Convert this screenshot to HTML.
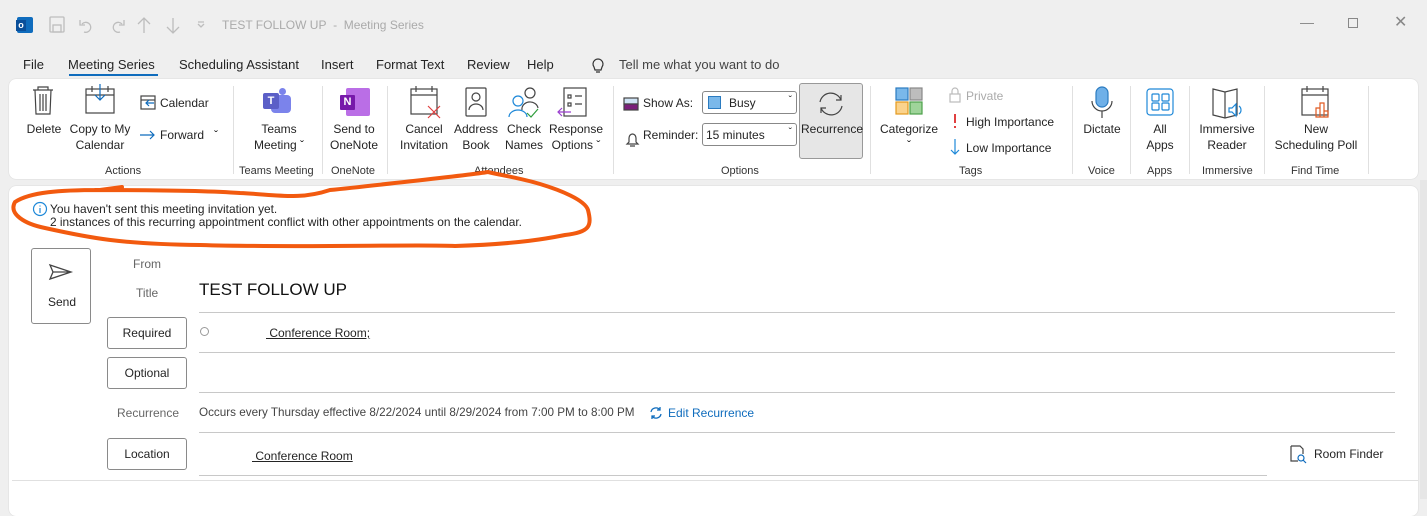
<!DOCTYPE html>
<html><head><meta charset="utf-8"><style>
*{box-sizing:border-box;margin:0;padding:0}
body{width:1427px;height:499px;background:#efefef;font-family:"Liberation Sans",sans-serif;color:#242424;position:relative;overflow:hidden;font-size:12px}
.a{position:absolute;white-space:nowrap}
.panel{position:absolute;background:#fff;border-radius:7px;box-shadow:0 0 1px #bbb}
.lbl{position:absolute;font-size:11px;color:#333;top:165px}
.btxt{position:absolute;font-size:12px;text-align:center;line-height:16px}
.sep{position:absolute;top:86px;width:1px;height:88px;background:#e0e0e0}
.box{position:absolute;border:1px solid #8a8a8a;border-radius:3px;background:#fff;font-size:12px;text-align:center}
.line{position:absolute;height:1px;background:#c8c8c8}
.gray{color:#666}
u{text-decoration:underline}
</style></head><body>
<div class="a" style="left:17px;top:17px;width:16px;height:16px;background:#0f6cbd;border-radius:2px"></div>
<div class="a" style="left:16px;top:20px;width:10px;height:11px;background:#0a4f9a;color:#fff;font-size:9px;font-weight:bold;text-align:center;line-height:11px">o</div>
<svg class="a" style="left:40px;top:14px" width="170" height="22" fill="none" stroke="#bdbdbd" stroke-width="1.3">
<rect x="10" y="3" width="14" height="15" rx="1"/><rect x="13" y="11" width="8" height="7"/>
<path d="M42 10 a5 5 0 1 1 2 8 M40 6 v5 h5"/><path d="M82 10 a5 5 0 1 0 -2 8 M84 6 v5 h-5"/>
<path d="M104 4 v15 M98 10 l6 -6 6 6"/><path d="M133 4 v15 M127 13 l6 6 6 -6"/><path d="M158 10 l3 3 3 -3 M158 8 h6"/></svg>
<div class="a" style="left:222px;top:18px;font-size:12px;color:#aaa">TEST FOLLOW UP&nbsp; - &nbsp;Meeting Series</div>
<div class="a" style="left:1300px;top:14px;color:#888;font-size:14px">&#8212;</div>
<div class="a" style="left:1348px;top:18px;width:10px;height:10px;border:1px solid #888"></div>
<div class="a" style="left:1394px;top:12px;color:#888;font-size:16px">&#x2715;</div>
<div class="a" style="left:23px;top:57px;font-size:13px">File</div>
<div class="a" style="left:68px;top:57px;font-size:13px">Meeting Series</div>
<div class="a" style="left:69px;top:74px;width:89px;height:2px;background:#0f6cbd"></div>
<div class="a" style="left:179px;top:57px;font-size:13px">Scheduling Assistant</div>
<div class="a" style="left:321px;top:57px;font-size:13px">Insert</div>
<div class="a" style="left:376px;top:57px;font-size:13px">Format Text</div>
<div class="a" style="left:467px;top:57px;font-size:13px">Review</div>
<div class="a" style="left:527px;top:57px;font-size:13px">Help</div>
<svg class="a" style="left:590px;top:55px" width="16" height="20" fill="none" stroke="#333" stroke-width="1.2"><path d="M4 12 a5 5 0 1 1 8 0 l-1 3 h-6 z M6 17 h4"/></svg>
<div class="a" style="left:619px;top:57px;font-size:13px;color:#444">Tell me what you want to do</div>
<div class="panel" style="left:9px;top:79px;width:1409px;height:100px"></div>
<svg class="a" style="left:0;top:80px" width="1427" height="80" fill="none" stroke="#444" stroke-width="1.2">
<path d="M33 10 h20 M38 10 v-3 h10 v3 M35 10 l1 24 h14 l1 -24 M40 14 v17 M43 14 v17 M46 14 v17"/>
<rect x="86" y="9" width="28" height="24"/><path d="M86 15 h28 M92 6 v6 M108 6 v6"/><path d="M100 4 v16 M95 15 l5 5 5 -5" stroke="#0f6cbd"/>
<rect x="141" y="16" width="14" height="13"/><path d="M141 20 h14" /><path d="M154 23 h-8 M149 20 l-3 3 3 3" stroke="#0f6cbd"/>
<path d="M140 55 h14 M150 51 l4 4 -4 4" stroke="#0f6cbd"/>
<rect x="411" y="9" width="26" height="25"/><path d="M411 15 h26 M416 6 v6 M432 6 v6"/><path d="M428 26 l12 12 M440 26 l-12 12" stroke="#e04040"/>
<rect x="466" y="8" width="20" height="28" rx="1"/><circle cx="476" cy="17" r="4"/><path d="M469 30 a7 6 0 0 1 14 0"/>
<circle cx="530" cy="13" r="5"/><path d="M522 30 a8 7 0 0 1 16 -2"/><circle cx="518" cy="21" r="5" stroke="#1e88d8"/><path d="M509 37 a9 7 0 0 1 18 0" stroke="#1e88d8"/><path d="M527 33 l4 4 7 -8" stroke="#2e9d3c"/>
<rect x="564" y="8" width="22" height="28"/><path d="M568 15 h3 v3 h-3z M575 16 h7 M568 23 h3 v3 h-3z M575 24 h7"/><path d="M571 32 h-13 M562 28 l-4 4 4 4" stroke="#9b3fcf"/>
<rect x="624" y="18" width="14" height="6" fill="#cfe3f5" stroke="#444"/><rect x="624" y="24" width="14" height="6" fill="#7a1f7a" stroke="#444"/>
<path d="M629 58 a3.5 4 0 0 1 7 0 v4 l2 2 h-11 l2 -2z M630 66 h5"/>
<rect x="896" y="8" width="12" height="12" fill="#7ab8ea" stroke="#2b7bc0"/><rect x="910" y="8" width="12" height="12" fill="#bdbdbd" stroke="#888"/>
<rect x="896" y="22" width="12" height="12" fill="#fbd38d" stroke="#e39a1e"/><rect x="910" y="22" width="12" height="12" fill="#9fd49a" stroke="#4ca14a"/>
<rect x="950" y="14" width="10" height="8" stroke="#bbb"/><path d="M952 14 v-3 a3 3 0 0 1 6 0 v3" stroke="#bbb"/>
<path d="M955 34 v9 M955 46 v2" stroke="#e04040" stroke-width="2"/>
<path d="M955 59 v15 M951 70 l4 4 4 -4" stroke="#1e88d8"/>
<rect x="1096" y="7" width="12" height="20" rx="6" fill="#6fb0e8" stroke="#2b7bc0"/><path d="M1092 21 a10 10 0 0 0 20 0 M1102 31 v7"/>
<rect x="1147" y="9" width="26" height="26" rx="3" stroke="#1e88d8"/><rect x="1152" y="14" width="7" height="7" rx="1" stroke="#1e88d8"/><rect x="1162" y="14" width="7" height="7" rx="1" stroke="#1e88d8"/><rect x="1152" y="23" width="7" height="7" rx="1" stroke="#1e88d8"/><rect x="1162" y="23" width="7" height="7" rx="1" stroke="#1e88d8"/>
<path d="M1213 9 l12 3 12 -3 v26 l-12 3 -12 -3z M1225 12 v26"/><path d="M1229 28 h3 l4 -4 v12 l-4 -4 h-3z M1239 26 a5 5 0 0 1 0 8" stroke="#1e88d8"/>
<rect x="1302" y="9" width="26" height="26"/><path d="M1302 15 h26 M1307 6 v6 M1323 6 v6"/><path d="M1316 28 h4 v9 h-4z M1320 23 h4 v14 h-4z M1324 31 h4 v6 h-4z" stroke="#e05a22"/>
<path d="M1398 82 l5 4 5 -4"/>
</svg>
<div class="a" style="left:263px;top:93px;width:16px;height:16px;background:#5b5fc7;border-radius:2px;color:#fff;font-weight:bold;font-size:11px;text-align:center;line-height:16px;z-index:2">T</div>
<div class="a" style="left:271px;top:95px;width:20px;height:18px;background:#7b83eb;border-radius:4px"></div>
<div class="a" style="left:279px;top:88px;width:7px;height:7px;background:#7b83eb;border-radius:50%"></div>
<div class="a" style="left:346px;top:88px;width:24px;height:28px;background:#ba6ee6;border-radius:2px"></div>
<div class="a" style="left:340px;top:95px;width:15px;height:15px;background:#7719aa;color:#fff;font-weight:bold;font-size:11px;text-align:center;line-height:15px;border-radius:1px">N</div>
<div class="btxt" style="left:22px;top:121px;width:44px">Delete</div>
<div class="btxt" style="left:66px;top:121px;width:68px">Copy to My<br>Calendar</div>
<div class="a" style="left:160px;top:96px">Calendar</div>
<div class="a" style="left:160px;top:128px">Forward &nbsp;&nbsp;&#711;</div>
<div class="btxt" style="left:244px;top:121px;width:70px">Teams<br>Meeting &#711;</div>
<div class="btxt" style="left:326px;top:121px;width:56px">Send to<br>OneNote</div>
<div class="btxt" style="left:396px;top:121px;width:56px">Cancel<br>Invitation</div>
<div class="btxt" style="left:452px;top:121px;width:48px">Address<br>Book</div>
<div class="btxt" style="left:502px;top:121px;width:44px">Check<br>Names</div>
<div class="btxt" style="left:546px;top:121px;width:60px">Response<br>Options &#711;</div>
<div class="a" style="left:643px;top:96px">Show As:</div>
<div class="a" style="left:643px;top:128px">Reminder:</div>
<div class="a" style="left:702px;top:91px;width:95px;height:23px;border:1px solid #888;border-radius:3px;background:#fff"><div class="a" style="left:5px;top:4px;width:13px;height:13px;background:#7ab8ea;border:1px solid #2b7bc0"></div><span class="a" style="left:26px;top:4px">Busy</span><span class="a" style="right:4px;top:3px;font-size:10px">&#711;</span></div>
<div class="a" style="left:702px;top:123px;width:95px;height:23px;border:1px solid #888;border-radius:3px;background:#fff"><span class="a" style="left:3px;top:4px">15 minutes</span><span class="a" style="right:4px;top:3px;font-size:10px">&#711;</span></div>
<div class="a" style="left:799px;top:83px;width:64px;height:76px;background:#e6e6e6;border:1px solid #999;border-radius:3px"></div>
<svg class="a" style="left:0;top:80px;z-index:2" width="900" height="50" fill="none" stroke="#444" stroke-width="1.2"><path d="M820 22 a11 11 0 0 1 21 -2 M841 15 v5 h-5 M842 26 a11 11 0 0 1 -21 2 M821 33 v-5 h5"/></svg>
<div class="a" style="left:801px;top:122px">Recurrence</div>
<div class="btxt" style="left:878px;top:121px;width:62px">Categorize<br>&#711;</div>
<div class="a" style="left:966px;top:89px;color:#aaa">Private</div>
<div class="a" style="left:966px;top:115px">High Importance</div>
<div class="a" style="left:966px;top:141px">Low Importance</div>
<div class="btxt" style="left:1080px;top:121px;width:44px">Dictate</div>
<div class="btxt" style="left:1140px;top:121px;width:40px">All<br>Apps</div>
<div class="btxt" style="left:1194px;top:121px;width:66px">Immersive<br>Reader</div>
<div class="btxt" style="left:1270px;top:121px;width:92px">New<br>Scheduling Poll</div>
<div class="lbl" style="left:105px">Actions</div>
<div class="lbl" style="left:239px">Teams Meeting</div>
<div class="lbl" style="left:331px">OneNote</div>
<div class="lbl" style="left:474px">Attendees</div>
<div class="lbl" style="left:721px">Options</div>
<div class="lbl" style="left:959px">Tags</div>
<div class="lbl" style="left:1088px">Voice</div>
<div class="lbl" style="left:1147px">Apps</div>
<div class="lbl" style="left:1202px">Immersive</div>
<div class="lbl" style="left:1291px">Find Time</div>
<div class="sep" style="left:233px"></div><div class="sep" style="left:322px"></div><div class="sep" style="left:387px"></div><div class="sep" style="left:613px"></div><div class="sep" style="left:870px"></div><div class="sep" style="left:1072px"></div><div class="sep" style="left:1130px"></div><div class="sep" style="left:1189px"></div><div class="sep" style="left:1264px"></div><div class="sep" style="left:1368px"></div>
<div class="panel" style="left:9px;top:186px;width:1409px;height:330px"></div>
<div class="a" style="left:1420px;top:180px;width:7px;height:319px;background:#e6e6e6"></div>
<svg class="a" style="left:32px;top:201px" width="16" height="16" fill="none" stroke="#1e88d8" stroke-width="1.2"><circle cx="8" cy="8" r="6.5"/><path d="M8 7 v5 M8 4.5 v1"/></svg>
<div class="a" style="left:50px;top:202px;font-size:11.9px">You haven't sent this meeting invitation yet.</div>
<div class="a" style="left:50px;top:215px;font-size:11.9px">2 instances of this recurring appointment conflict with other appointments on the calendar.</div>
<svg class="a" style="left:0;top:0" width="620" height="260" fill="none" stroke="#f25a0f" stroke-width="4" stroke-linecap="round"><path d="M122 187 L100 190 C60 190 30 192 15 202 C8 214 25 224 45 228 C90 238 120 244 200 245 C300 248 420 244 455 246 C520 244 550 238 565 235 C590 232 592 226 588 210 C585 200 560 190 540 184 C520 178 500 175 488 172 M488 172 C470 175 350 188 330 190 C300 200 280 195 240 193 C200 190 130 190 95 190"/></svg>
<div class="box" style="left:31px;top:248px;width:60px;height:76px"></div>
<svg class="a" style="left:48px;top:262px" width="26" height="22" fill="none" stroke="#444" stroke-width="1.3"><path d="M2 3 L23 10 L2 17 L5 10 Z M5 10 h18"/></svg>
<div class="a" style="left:48px;top:295px">Send</div>
<div class="a gray" style="left:133px;top:257px">From</div>
<div class="a gray" style="left:136px;top:286px">Title</div>
<div class="a" style="left:199px;top:280px;font-size:17px;color:#111">TEST FOLLOW UP</div>
<div class="line" style="left:199px;top:312px;width:1196px"></div>
<div class="box" style="left:107px;top:317px;width:80px;height:32px;line-height:30px">Required</div>
<div class="a" style="left:200px;top:327px;width:9px;height:9px;border:1px solid #999;border-radius:50%"></div>
<div class="a" style="left:266px;top:326px"><u>&nbsp;Conference Room;</u></div>
<div class="line" style="left:199px;top:352px;width:1196px"></div>
<div class="box" style="left:107px;top:357px;width:80px;height:32px;line-height:30px">Optional</div>
<div class="line" style="left:199px;top:392px;width:1196px"></div>
<div class="a gray" style="left:117px;top:406px">Recurrence</div>
<div class="a" style="left:199px;top:406px;color:#444;font-size:11.7px">Occurs every Thursday effective 8/22/2024 until 8/29/2024 from 7:00 PM to 8:00 PM</div>
<svg class="a" style="left:648px;top:405px" width="16" height="16" fill="none" stroke="#0f6cbd" stroke-width="1.3"><path d="M3 7 a5 5 0 0 1 9 -2 M12 2 v3 h-3 M13 9 a5 5 0 0 1 -9 2 M4 14 v-3 h3"/></svg>
<div class="a" style="left:668px;top:406px;color:#0f6cbd">Edit Recurrence</div>
<div class="line" style="left:199px;top:432px;width:1196px"></div>
<div class="box" style="left:107px;top:438px;width:80px;height:32px;line-height:30px">Location</div>
<div class="a" style="left:252px;top:449px"><u>&nbsp;Conference Room</u></div>
<div class="line" style="left:199px;top:475px;width:1068px"></div>
<svg class="a" style="left:1288px;top:444px" width="20" height="20" fill="none" stroke="#444" stroke-width="1.2"><path d="M3 2 h9 l3 3 v5 M3 2 v15 h7"/><circle cx="13" cy="14" r="3" stroke="#0f6cbd"/><path d="M15 16 l3 3" stroke="#0f6cbd"/></svg>
<div class="a" style="left:1314px;top:447px">Room Finder</div>
<div class="line" style="left:12px;top:480px;width:1406px;background:#e0e0e0"></div>
</body></html>
